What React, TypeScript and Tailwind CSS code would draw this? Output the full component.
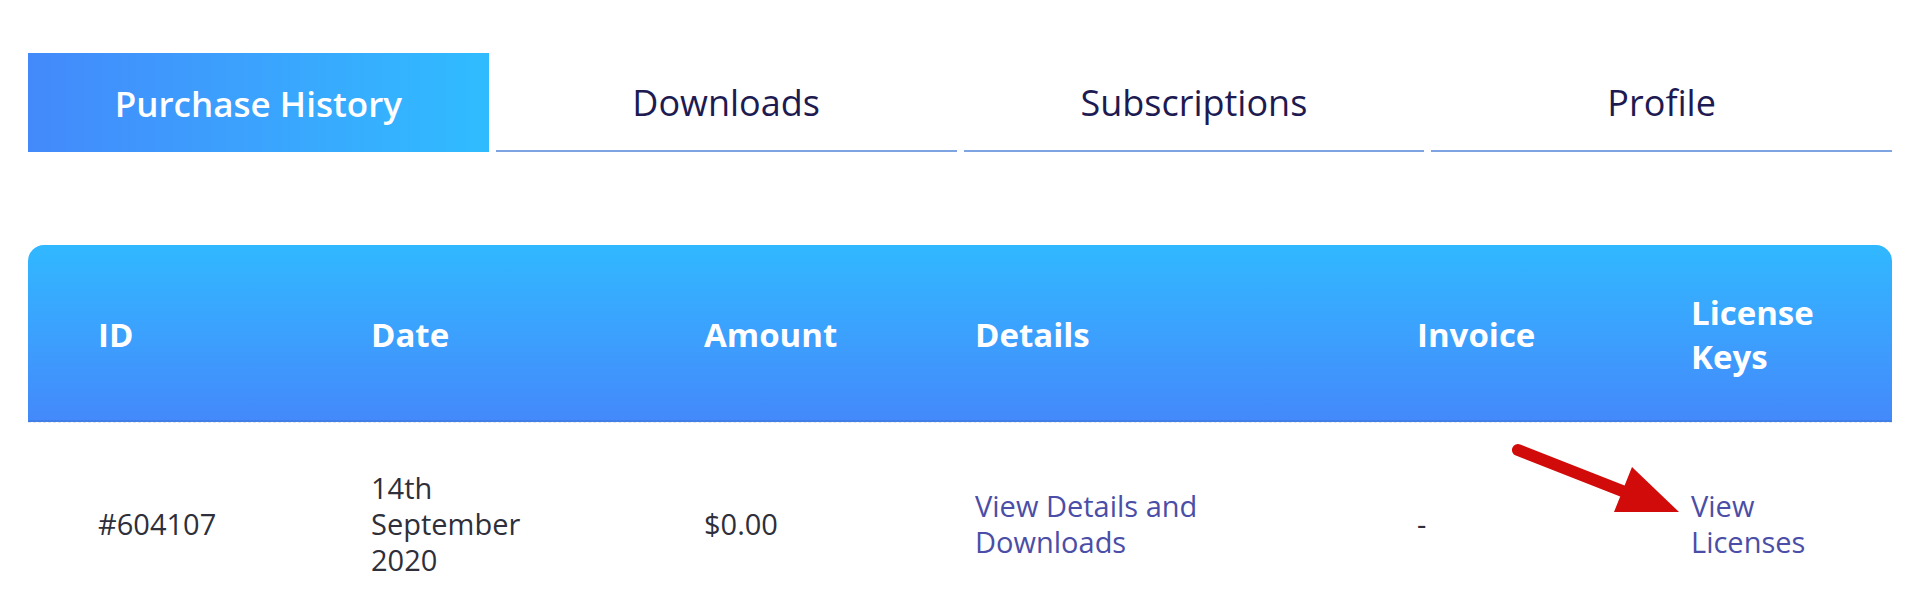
import React from "react"

const tabs = ["Purchase History", "Downloads", "Subscriptions", "Profile"]

const cols = [
  { label: "ID", w: "w-[273px]" },
  { label: "Date", w: "w-[333px]" },
  { label: "Amount", w: "w-[271px]" },
  { label: "Details", w: "w-[442px]" },
  { label: "Invoice", w: "w-[274px]" },
  { label: "License Keys", w: "flex-1" },
]

function RedArrow() {
  return (
    <svg
      className="absolute left-[1508px] top-[440px] pointer-events-none"
      width="180"
      height="80"
      viewBox="0 0 180 80"
    >
      <line x1="10" y1="10" x2="122" y2="54" stroke="#d10a0a" strokeWidth="12" strokeLinecap="round" />
      <polygon points="124,27 106,72 171,72" fill="#d10a0a" />
    </svg>
  )
}

export default function App() {
  return (
    <div className="relative w-[1920px] h-[609px] bg-white overflow-hidden font-['Open_Sans',sans-serif]">
      {/* Tabs */}
      <div className="flex gap-[7px] px-[28px] pt-[53px]">
        {tabs.map((tab, i) =>
          i === 0 ? (
            <div
              key={tab}
              className="flex-1 h-[99px] flex items-center justify-center pt-[3px] bg-gradient-to-r from-[#4389fb] to-[#2fbcff] text-white text-[35px] font-semibold"
            >
              {tab}
            </div>
          ) : (
            <div
              key={tab}
              className="flex-1 h-[99px] flex items-center justify-center pt-[3px] border-b-2 border-[#7ea4e4] text-[#1d1b52] text-[36px]"
            >
              {tab}
            </div>
          )
        )}
      </div>

      {/* Table */}
      <div className="mx-[28px] mt-[93px]">
        <div className="flex items-center h-[177px] rounded-t-[16px] bg-gradient-to-b from-[#30b8ff] to-[#4389fb] border-b-2 border-[#3f7fe6] text-white text-[33px] font-bold leading-[44px]">
          {cols.map((c) => (
            <div key={c.label} className={`${c.w} pl-[70px] pt-[4px]`}>
              <div className={c.label === "License Keys" ? "w-[140px]" : ""}>{c.label}</div>
            </div>
          ))}
        </div>
        <div className="flex items-center py-[47px] border-t border-dashed border-[#e6e8ee] text-[29px] leading-[36px] text-[#2e2f3a]">
          <div className="w-[273px] pl-[70px]">#604107</div>
          <div className="w-[333px] pl-[70px]">
            <div className="w-[180px]">14th September 2020</div>
          </div>
          <div className="w-[271px] pl-[70px]">$0.00</div>
          <div className="w-[442px] pl-[70px]">
            <a className="block w-[260px] text-[#4b4ea6]">View Details and Downloads</a>
          </div>
          <div className="w-[274px] pl-[70px]">-</div>
          <div className="flex-1 pl-[70px]">
            <a className="block w-[140px] text-[#4b4ea6]">View Licenses</a>
          </div>
        </div>
      </div>

      <RedArrow />
    </div>
  )
}
